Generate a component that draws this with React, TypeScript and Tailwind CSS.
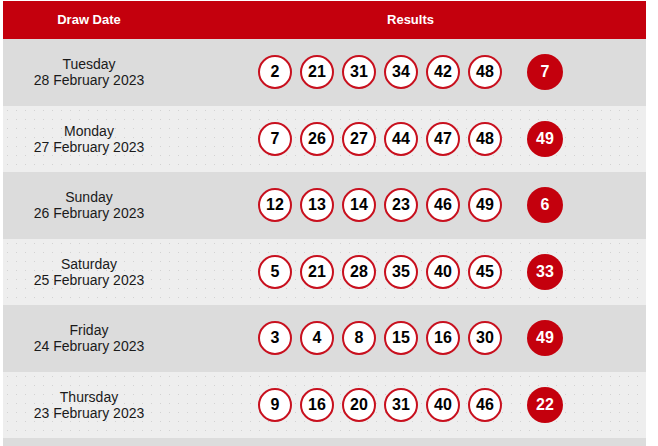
import React from "react";

const rows = [
  { day: "Tuesday", date: "28 February 2023", nums: [2, 21, 31, 34, 42, 48], bonus: 7 },
  { day: "Monday", date: "27 February 2023", nums: [7, 26, 27, 44, 47, 48], bonus: 49 },
  { day: "Sunday", date: "26 February 2023", nums: [12, 13, 14, 23, 46, 49], bonus: 6 },
  { day: "Saturday", date: "25 February 2023", nums: [5, 21, 28, 35, 40, 45], bonus: 33 },
  { day: "Friday", date: "24 February 2023", nums: [3, 4, 8, 15, 16, 30], bonus: 49 },
  { day: "Thursday", date: "23 February 2023", nums: [9, 16, 20, 31, 40, 46], bonus: 22 },
];

export default function App() {
  return (
    <div className="w-[658px] h-[446px] overflow-hidden bg-white pt-[1px] pl-[3px] font-['Liberation_Sans',Arial,sans-serif]">
      <div className="w-[643px]">
        <div className="flex h-[38px] bg-[#c4000d] text-white text-[13px] font-bold items-center">
          <div className="w-[172px] text-center">Draw Date</div>
          <div className="flex-1 text-center">Results</div>
        </div>
        {rows.map((r, i) => (
          <div
            key={i}
            className={
              "flex h-[66.5px] items-center " +
              (i % 2 === 0
                ? "bg-[#dcdcdc]"
                : "bg-[#eeeeee] bg-[radial-gradient(circle,#d2d2d2_0.8px,transparent_1px)] bg-[length:9px_9px]")
            }
          >
            <div className="w-[172px] text-center text-[14px] leading-[16px] text-[#1a1a1a]">
              <div>{r.day}</div>
              <div>{r.date}</div>
            </div>
            <div className="flex-1 flex justify-center items-center">
              <div className="flex gap-[8px]">
                {r.nums.map((n, j) => (
                  <div
                    key={j}
                    className="w-[34px] h-[34px] rounded-full border-2 border-[#c8101e] bg-white flex items-center justify-center text-[16px] font-bold text-black"
                  >
                    {n}
                  </div>
                ))}
              </div>
              <div className="ml-[25px] w-[36px] h-[36px] rounded-full bg-[#c4000d] flex items-center justify-center text-[16px] font-bold text-white">
                {r.bonus}
              </div>
            </div>
          </div>
        ))}
        <div className="h-[20px] bg-[#dcdcdc]" />
      </div>
    </div>
  );
}
